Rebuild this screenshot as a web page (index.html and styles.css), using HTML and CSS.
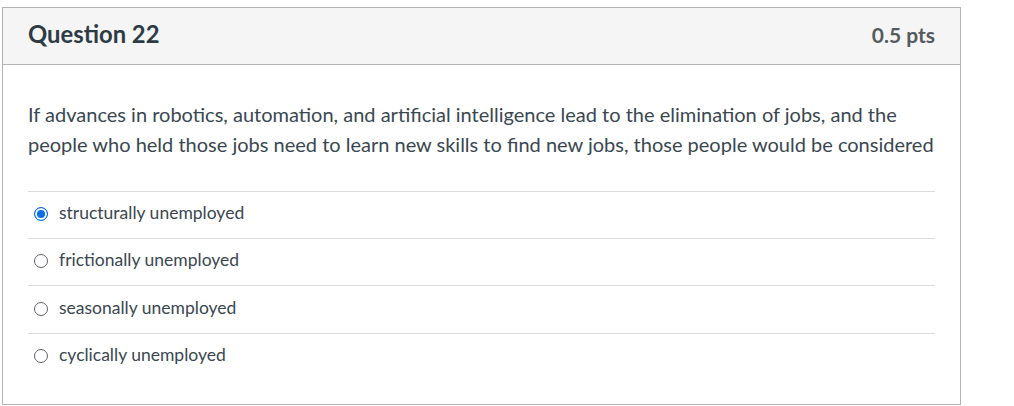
FILE: index.html
```html
<!DOCTYPE html>
<html lang="en">
<head>
<meta charset="utf-8">
<link rel="stylesheet" href="styles.css">
</head>
<body>
<div class="question">
  <div class="q-header">
    <h2 class="q-title">Question 22</h2>
    <div class="q-points">0.5 pts</div>
  </div>
  <div class="q-body">
    <p class="q-text">If advances in robotics, automation, and artificial intelligence lead to the elimination of jobs, and the people who held those jobs need to learn new skills to find new jobs, those people would be considered</p>
    <div class="answers">
      <label class="answer"><span class="radio checked"></span><span class="answer-text">structurally unemployed</span></label>
      <label class="answer"><span class="radio"></span><span class="answer-text">frictionally unemployed</span></label>
      <label class="answer answer-tall"><span class="radio"></span><span class="answer-text">seasonally unemployed</span></label>
      <label class="answer"><span class="radio"></span><span class="answer-text">cyclically unemployed</span></label>
    </div>
  </div>
</div>
</body>
</html>
```
FILE: styles.css
```css
html, body {
  margin: 0;
  padding: 0;
  background: #ffffff;
}
body {
  font-family: Lato, "Liberation Sans", sans-serif;
  color: #2d3b45;
}
.question {
  margin: 7px 0 0 2px;
  width: 957px;
  border: 1px solid #b3b3b3;
  box-sizing: content-box;
}
.q-header {
  display: flex;
  justify-content: space-between;
  align-items: center;
  height: 52px;
  padding: 0 25px 4px 25px;
  background: #f5f5f5;
  border-bottom: 1px solid #b3b3b3;
}
.q-title {
  margin: 0;
  font-size: 23.8px;
  font-weight: 700;
  color: #2d3b45;
}
.q-points {
  font-size: 21px;
  font-weight: 700;
  color: #555a5e;
}
.q-body {
  padding: 34px 25px 24px 25px;
}
.q-text {
  margin: 0 0 32px 0;
  font-size: 20px;
  line-height: 30px;
  color: #3a4750;
}
.answers {
  display: flex;
  flex-direction: column;
}
.answer {
  display: flex;
  align-items: center;
  height: 46px;
  box-sizing: border-box;
  height: 47px;
  padding: 0 0 2px 6px;
  border-top: 1px solid #dcdcdc;
  font-size: 17.5px;
  color: #3a4750;
}
.answer-tall {
  height: 48px;
}
.radio {
  width: 12px;
  height: 12px;
  border: 1px solid #5f6368;
  border-radius: 50%;
  margin-right: 11px;
  flex: none;
  box-sizing: content-box;
}
.radio.checked {
  border: 1px solid #0b6fe6;
  background: #0b6fe6;
  box-shadow: inset 0 0 0 2px #ffffff;
}
.answer-text {
  line-height: 24px;
  position: relative;
  top: -1px;
}
```
